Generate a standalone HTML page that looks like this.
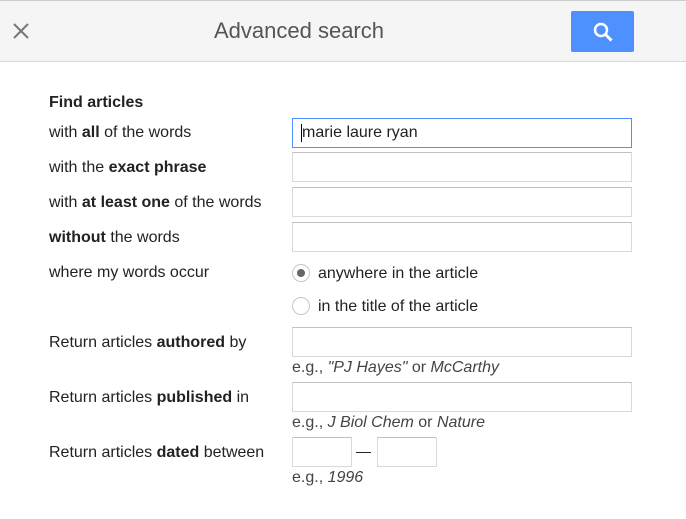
<!DOCTYPE html>
<html><head><style>
body{margin:0;width:686px;height:519px;background:#fff;font-family:"Liberation Sans",Arial,sans-serif;color:#222;font-size:16px;position:relative;overflow:hidden}
.hdr{position:absolute;left:0;top:0;width:686px;height:60px;background:#f5f5f5;border-top:1px solid #ccc;border-bottom:1px solid #d8d8d8}
.t{position:absolute;left:0;width:598px;text-align:center;top:17px;font-size:22px;color:#555}
.btn{position:absolute;left:571px;top:10px;width:63px;height:41px;background:#4d90fe;border-radius:2px}
.a{position:absolute;white-space:nowrap}
.in{position:absolute;left:292px;width:338px;height:28px;border:1px solid #d9d9d9;border-top-color:#c0c0c0;box-sizing:content-box}
.r{position:absolute;left:292px;width:18px;height:18px;border:1px solid #c6c6c6;border-radius:50%;box-sizing:border-box;background:#fff}
.h{position:absolute;left:292px;color:#444}
</style></head><body>
<div class="hdr">
<svg style="position:absolute;left:12px;top:21px" width="18" height="18"><path d="M2 2L16 16M16 2L2 16" stroke="#777" stroke-width="2"/></svg>
<div class="t">Advanced search</div>
<div class="btn"><svg style="position:absolute;left:21px;top:10px" width="22" height="22"><circle cx="9" cy="9" r="6" stroke="#fff" stroke-width="2.5" fill="none"/><path d="M13.5 13.5L19.5 19.5" stroke="#fff" stroke-width="3"/></svg></div>
</div>
<div class="a" style="left:49px;top:94px;font-weight:bold">Find articles</div>
<div class="a" style="left:49px;top:124px">with <b>all</b> of the words</div>
<div class="a" style="left:49px;top:159px">with the <b>exact phrase</b></div>
<div class="a" style="left:49px;top:194px">with <b>at least one</b> of the words</div>
<div class="a" style="left:49px;top:229px"><b>without</b> the words</div>
<div class="a" style="left:49px;top:264px">where my words occur</div>
<div class="a" style="left:49px;top:334px">Return articles <b>authored</b> by</div>
<div class="a" style="left:49px;top:389px">Return articles <b>published</b> in</div>
<div class="a" style="left:49px;top:444px">Return articles <b>dated</b> between</div>
<div class="in" style="top:118px;border-color:#4d90fe"><span style="position:absolute;left:8px;top:5px;border-left:1px solid #000">marie laure ryan</span></div>
<div class="in" style="top:152px"></div>
<div class="in" style="top:187px"></div>
<div class="in" style="top:222px"></div>
<div class="r" style="top:264px"><div style="position:absolute;left:4px;top:4px;width:8px;height:8px;border-radius:50%;background:#666"></div></div>
<div class="a" style="left:318px;top:265px">anywhere in the article</div>
<div class="r" style="top:297px"></div>
<div class="a" style="left:318px;top:298px">in the title of the article</div>
<div class="in" style="top:327px"></div>
<div class="h" style="top:359px">e.g., <i>"PJ Hayes"</i> or <i>McCarthy</i></div>
<div class="in" style="top:382px"></div>
<div class="h" style="top:414px">e.g., <i>J Biol Chem</i> or <i>Nature</i></div>
<div class="in" style="top:437px;width:58px"></div>
<div style="position:absolute;left:356px;top:452px;width:15px;height:1px;background:#222"></div>
<div class="in" style="top:437px;left:377px;width:58px"></div>
<div class="h" style="top:469px">e.g., <i>1996</i></div>
</body></html>
